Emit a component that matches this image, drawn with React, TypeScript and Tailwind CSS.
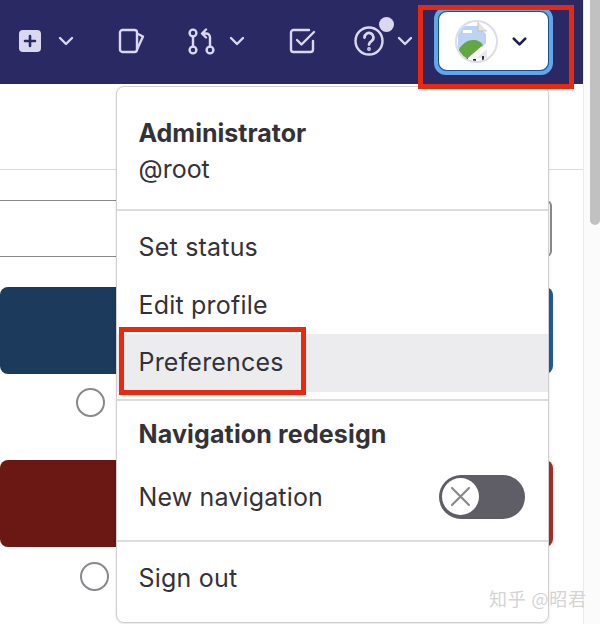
import { ChevronDown } from "lucide-react";

const iconColor = "#dad8f0";

function NewIcon() {
  return (
    <svg width="23" height="23" viewBox="0 0 23 23" className="shrink-0">
      <rect x="0" y="0" width="22" height="22" rx="4" fill={iconColor} />
      <path d="M11 6v10M6 11h10" stroke="#2b2963" strokeWidth="2.6" strokeLinecap="round" />
    </svg>
  );
}

function SnippetIcon() {
  return (
    <svg width="27" height="26" viewBox="0 0 27 26" fill="none" stroke={iconColor} strokeWidth="2.4" strokeLinejoin="round" className="shrink-0">
      <rect x="2" y="2" width="17" height="22" rx="2.5" />
      <path d="M19 5.5l6 3-6 13" />
    </svg>
  );
}

function MergeIcon() {
  return (
    <svg width="28" height="27" viewBox="0 0 28 27" fill="none" stroke={iconColor} strokeWidth="2.4" strokeLinecap="round" strokeLinejoin="round" className="shrink-0">
      <circle cx="5" cy="5" r="3.4" />
      <circle cx="5" cy="22" r="3.4" />
      <circle cx="22" cy="22" r="3.4" />
      <path d="M5 8.5v10M22 18.5v-9c0-2.5-1.5-4-4-4h-3M18 1.500l-4 4 4 4" />
    </svg>
  );
}

function TodoIcon() {
  return (
    <svg width="27" height="26" viewBox="0 0 27 26" fill="none" stroke={iconColor} strokeWidth="2.4" strokeLinecap="round" strokeLinejoin="round" className="shrink-0">
      <path d="M20 2H4.500A2.500 2.500 0 0 0 2 4.500v17A2.500 2.500 0 0 0 4.500 24h17a2.500 2.500 0 0 0 2.500-2.500V13" />
      <path d="M8 12l4.500 4.500L25 4" />
    </svg>
  );
}

function HelpIcon() {
  return (
    <div className="relative h-[30px] w-[30px] shrink-0">
      <svg width="30" height="30" viewBox="0 0 30 30" fill="none" stroke={iconColor} strokeWidth="2.4" strokeLinecap="round">
        <circle cx="15" cy="15" r="13.500" />
        <path d="M10.500 11.500a4.500 4.500 0 1 1 7 3.700c-1.500 1-2.500 1.800-2.500 3.300" strokeWidth="2.800" />
        <circle cx="15" cy="23" r="0.700" strokeWidth="2.400" />
      </svg>
      <span className="absolute left-[25px] top-[-9px] h-[15px] w-[15px] rounded-full bg-[#dad8f0]" />
    </div>
  );
}

function Avatar() {
  return (
    <div className="h-[43px] w-[43px] shrink-0 overflow-hidden rounded-full border-2 border-[#dcdcee] bg-white">
      <svg width="39" height="39" viewBox="0 0 39 39">
        <path d="M1 4h20l8 8v12L1 30z" fill="#bcd3f2" />
        <path d="M21 0l9 9h-9z" fill="#e2e2e6" />
        <path d="M21 0v9h9" fill="none" stroke="#b9b9bd" strokeWidth="0.8" />
        <path d="M6 8h9v3H6z" fill="#fff" />
        <path d="M0 31c4-9 10-13 16-13 5 0 8 2 10 5L11 36H0z" fill="#62a742" />
        <path d="M12 39l23-24v6L20 39z" fill="#fff" />
        <path d="M20 36l10-9v9z" fill="#e8e8ea" />
        <path d="M8 36h3v2H8zM25 34h2v4h-2zM16 37h3v2h-3z" fill="#333238" />
      </svg>
    </div>
  );
}

function MenuRow({ label, active }: { label: string; active?: boolean }) {
  return (
    <div className={`flex h-[57.500px] items-center px-[21.500px] text-[25px] tracking-[0.2px] text-[#333238] ${active ? "bg-[#ececef]" : ""}`}>
      {label}
    </div>
  );
}

function Bar({ color, edge }: { color: string; edge: string }) {
  return <div className={`h-[87px] w-[553px] rounded-[8px] ${color} border-r-4 ${edge}`} />;
}

export default function App() {
  return (
    <div className="relative flex h-[624px] w-[600px] overflow-hidden bg-white font-['Inter','Noto_Sans',sans-serif]">
      <div className="flex w-[583px] shrink-0 flex-col">
        {/* top bar */}
        <div className="flex h-[84px] shrink-0 items-center bg-[#2b2963] pb-[2px] pl-[19px]">
          <NewIcon />
          <ChevronDown size={24} strokeWidth={2.4} color={iconColor} className="ml-[12px]" />
          <div className="ml-[40px]">
            <SnippetIcon />
          </div>
          <div className="ml-[43px]">
            <MergeIcon />
          </div>
          <ChevronDown size={24} strokeWidth={2.4} color={iconColor} className="ml-[9px]" />
          <div className="ml-[40px]">
            <TodoIcon />
          </div>
          <div className="ml-[38px]">
            <HelpIcon />
          </div>
          <ChevronDown size={24} strokeWidth={2.4} color={iconColor} className="ml-[9px]" />
          <div className="ml-[17px] rounded-[12px] border-[4px] border-[#63a6e9] bg-[#1f75cb]">
            <div className="flex h-[60px] w-[111px] items-center rounded-[9px] border border-[#1b4f86] bg-white pl-[16px]">
              <Avatar />
              <ChevronDown size={23} strokeWidth={2.8} color="#1f1e4e" className="ml-[10px]" />
            </div>
          </div>
        </div>

        {/* page behind the menu */}
        <div className="flex flex-1 flex-col">
          <div className="mt-[85px] h-px w-full bg-[#dcdcde]" />
          <div className="mt-[30px] h-[57px] w-[552px] rounded-r-[6px] border-y border-r-2 border-[#89888d]" />
          <div className="mt-[30px]">
            <Bar color="bg-[#1b3a5c]" edge="border-[#1f5a9e]" />
          </div>
          <div className="ml-[76px] mt-[14px] h-[29px] w-[29px] rounded-full border-2 border-[#89888d]" />
          <div className="mt-[43px]">
            <Bar color="bg-[#6b1713]" edge="border-[#a82d25]" />
          </div>
          <div className="ml-[80px] mt-[15px] h-[29px] w-[29px] rounded-full border-2 border-[#89888d]" />
        </div>
      </div>

      {/* page scrollbar */}
      <div className="flex-1 border-l border-[#ececec] bg-[#fbfbfb] pl-[6px]">
        <div className="h-[225px] w-full rounded-b-[6px] bg-[#c1c1c1]" />
      </div>

      {/* user menu */}
      <div className="absolute left-[116px] top-[86px] w-[433px] rounded-[8px] border border-[#d0d0d2] bg-white pb-[15px] shadow-[0_1px_3px_rgba(0,0,0,0.12)]">
        <div className="h-[122px] px-[21.500px] pt-[28px] text-[25px] leading-[36px] text-[#333238]">
          <div className="font-bold">Administrator</div>
          <div>@root</div>
        </div>
        <div className="h-[2px] bg-[#dcdcde]" />
        <div className="pt-[8px]">
          <MenuRow label="Set status" />
          <MenuRow label="Edit profile" />
          <MenuRow label="Preferences" active />
        </div>
        <div className="mt-[7px] h-[2px] bg-[#dcdcde]" />
        <div className="px-[21.500px] pt-[15px] text-[25px] font-bold leading-[36px] tracking-[0.15px] text-[#333238]">Navigation redesign</div>
        <div className="flex items-center justify-between pl-[21.500px] pr-[23px] pt-[23px] text-[25px] leading-[36px] tracking-[0.15px] text-[#333238]">
          New navigation
          <div className="flex h-[44px] w-[86px] items-center rounded-full bg-[#5f5e66] pl-[3px]">
            <div className="flex h-[37px] w-[37px] items-center justify-center rounded-full bg-white">
              <svg width="21" height="21" viewBox="0 0 21 21" stroke="#89888d" strokeWidth="2.200" strokeLinecap="round">
                <path d="M2 2l17 17M19 2L2 19" />
              </svg>
            </div>
          </div>
        </div>
        <div className="mt-[21px] h-[2px] bg-[#dcdcde]" />
        <div className="pt-[8px]">
          <MenuRow label="Sign out" />
        </div>
      </div>

      {/* annotations */}
      <div className="absolute left-[418px] top-[5px] h-[84px] w-[156px] border-[5px] border-[#e8290f]" />
      <div className="absolute left-[119px] top-[327px] h-[68px] w-[187px] border-[5px] border-[#e8290f]" />
      <div className="absolute left-[489px] top-[585px] text-[18px] tracking-[0.8px] text-[#d4d4d4] font-['Noto_Sans_CJK_SC',sans-serif]">知乎 @昭君</div>
    </div>
  );
}
